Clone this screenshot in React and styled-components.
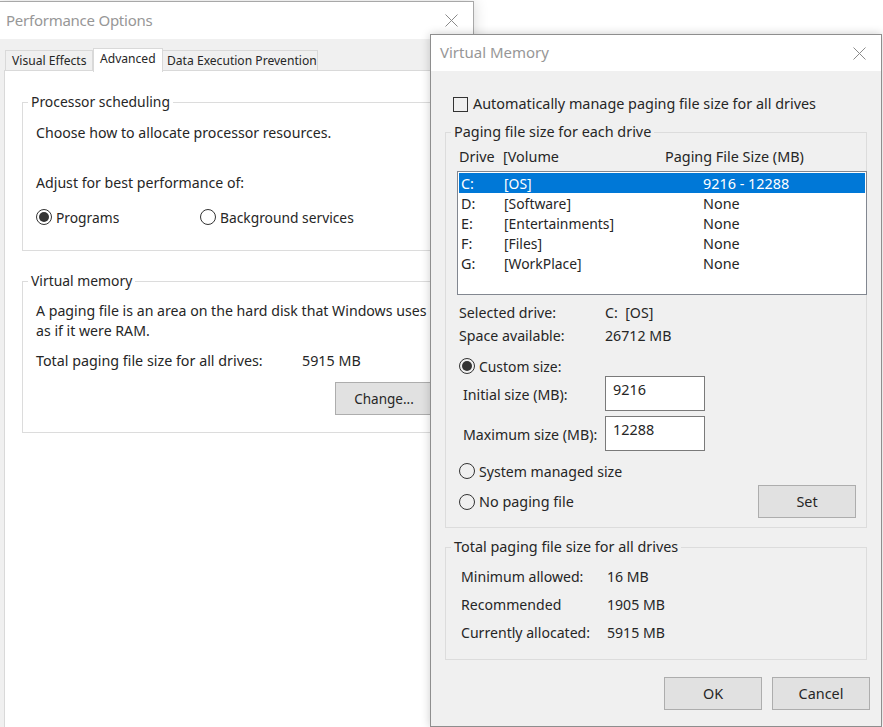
import React from "react";
import styled, { createGlobalStyle } from "styled-components";

const Global = createGlobalStyle`
  html, body { margin: 0; padding: 0; background: #fff; }
  * { box-sizing: border-box; }
`;

const Desktop = styled.div`
  position: relative;
  width: 883px;
  height: 727px;
  overflow: hidden;
  background: #fff;
  font-family: "Noto Sans", "Open Sans", sans-serif;
  font-size: 14.4px;
  line-height: 20px;
  color: #262626;
  white-space: nowrap;
`;

const BackWindow = styled.section`
  position: absolute;
  left: -1px;
  top: 1px;
  width: 475px;
  height: 760px;
  display: flex;
  flex-direction: column;
  font-size: 14.15px;
  background: #f0f0f0;
  border: 1px solid #a8a8a8;
  box-shadow: 0 0 14px rgba(0, 0, 0, 0.16);
`;

const DialogWindow = styled.section`
  position: absolute;
  left: 430px;
  top: 34px;
  width: 452px;
  height: 693px;
  display: flex;
  flex-direction: column;
  background: #f0f0f0;
  border: 1px solid #8e8e8e;
  box-shadow: 0 0 9px rgba(0, 0, 0, 0.2);
`;

const TitleBar = styled.header`
  display: flex;
  align-items: center;
  justify-content: space-between;
  flex: none;
  height: ${(p) => p.$height}px;
  padding: 0 15px 0 ${(p) => p.$left}px;
  background: #fff;
`;

const TitleText = styled.h1`
  margin: 0 0 2px;
  font-size: 15px;
  font-weight: 400;
  letter-spacing: ${(p) => p.$spacing || 0}px;
  color: #979797;
`;

const CloseGlyph = styled.svg`
  display: block;
  width: 13px;
  height: 13px;
  stroke: #8a8a8a;
  stroke-width: 1;
  fill: none;
`;

const CloseIcon = () => (
  <CloseGlyph viewBox="0 0 13 13">
    <path d="M0.5 0.5 L12.5 12.5 M12.5 0.5 L0.5 12.5" />
  </CloseGlyph>
);

const TabStrip = styled.nav`
  display: flex;
  align-items: flex-end;
  flex: none;
  height: 24px;
  margin: 8px 0 0 6px;
  position: relative;
  z-index: 1;
`;

const Tab = styled.div`
  height: ${(p) => (p.$active ? 24 : 21)}px;
  width: ${(p) => p.$width}px;
  margin-bottom: ${(p) => (p.$active ? -1 : 0)}px;
  padding-left: ${(p) => p.$pad}px;
  font-size: 12.1px;
  line-height: 20px;
  background: ${(p) => (p.$active ? "#fff" : "#f0f0f0")};
  border: 1px solid #d9d9d9;
  border-bottom: ${(p) => (p.$active ? "0" : "1px solid #d9d9d9")};
  margin-left: ${(p) => (p.$active ? 0 : -1)}px;
`;

const TabPanel = styled.div`
  flex: 1;
  margin-left: 4px;
  margin-top: -1px;
  padding: 21px 0 0 17px;
  background: #fff;
  border: 1px solid #d9d9d9;
`;

const Group = styled.fieldset`
  margin: ${(p) => p.$margin || 0};
  padding: ${(p) => p.$pad || 0};
  min-width: 0;
  border: 1px solid #dcdcdc;
`;

const Legend = styled.legend`
  margin-left: 5px;
  padding: 0 3px;
  line-height: 20px;
  font-size: ${(p) => (p.$size ? `${p.$size}px` : "inherit")};
`;

const Line = styled.p`
  margin: ${(p) => p.$top || 0}px 0 0 0;
  padding-left: ${(p) => p.$left || 0}px;
  line-height: 20px;
`;

const RadioRow = styled.div`
  display: flex;
  align-items: center;
  margin-top: ${(p) => p.$top || 0}px;
  padding-left: ${(p) => p.$left || 0}px;
  height: 20px;
`;

const RadioItem = styled.label`
  display: flex;
  align-items: center;
  gap: 4px;
  width: ${(p) => (p.$width ? `${p.$width}px` : "auto")};
  font-size: ${(p) => (p.$size ? `${p.$size}px` : "inherit")};
  line-height: 21px;
`;

const RadioMark = styled.span`
  display: flex;
  align-items: center;
  justify-content: center;
  flex: none;
  width: 16px;
  height: 16px;
  border: 1px solid #333;
  border-radius: 50%;
  &::after {
    content: "";
    display: ${(p) => (p.$on ? "block" : "none")};
    width: 10px;
    height: 10px;
    border-radius: 50%;
    background: #333;
  }
`;

const Pair = styled.div`
  display: grid;
  grid-template-columns: ${(p) => p.$col}px auto;
  height: ${(p) => p.$height || 20}px;
  align-items: center;
  margin-top: ${(p) => p.$top || 0}px;
  padding-left: ${(p) => p.$left || 0}px;
  font-size: ${(p) => (p.$size ? `${p.$size}px` : "inherit")};
`;

const Button = styled.button`
  display: block;
  flex: none;
  width: 98px;
  height: 33px;
  margin: ${(p) => p.$margin || 0};
  padding: 0;
  font-family: inherit;
  font-size: ${(p) => p.$size || 14.4}px;
  color: #262626;
  background: #e1e1e1;
  border: 1px solid #adadad;
`;

const DialogBody = styled.div`
  flex: 1;
  padding: 0 11px 0 14px;
`;

const CheckRow = styled.label`
  display: flex;
  align-items: center;
  gap: 5px;
  height: 16px;
  margin-top: 25px;
  padding-left: 8px;
`;

const CheckBox = styled.span`
  display: block;
  flex: none;
  width: 15px;
  height: 15px;
  border: 1px solid #333;
`;

const ColumnHead = styled.div`
  display: grid;
  grid-template-columns: 44px 162px auto;
  height: 20px;
  margin-top: 5px;
  padding-left: 13px;
  line-height: 20px;
`;

const ListBox = styled.div`
  height: 124px;
  margin: 4px -1px 0 11px;
  padding: 1px;
  background: #fff;
  border: 1px solid #828790;
`;

const ListRow = styled.div`
  display: grid;
  grid-template-columns: 43px 199px auto;
  height: 20px;
  padding-left: 2px;
  line-height: 22px;
  color: ${(p) => (p.$selected ? "#fff" : "#262626")};
  background: ${(p) => (p.$selected ? "#0078d7" : "transparent")};
`;

const VolumeCell = styled.span`
  font-size: 13.9px;
`;

const SizeRow = styled.div`
  display: grid;
  grid-template-columns: 142px 100px;
  align-items: center;
  height: 35px;
  margin-top: ${(p) => p.$top || 0}px;
  padding-left: 17px;
`;

const SizeLabel = styled.span`
  padding-top: 2px;
  font-size: 14.2px;
`;

const SizeInput = styled.div`
  height: 35px;
  padding: 3px 0 0 7px;
  background: #fff;
  border: 1px solid #7a7a7a;
`;

const SetRow = styled.div`
  display: flex;
  align-items: center;
  justify-content: space-between;
  margin-top: 4px;
  padding: 0 10px 9px 13px;
`;

const Footer = styled.footer`
  display: flex;
  justify-content: flex-end;
  gap: 10px;
  margin-top: 17px;
`;

const drives = [
  { d: "C:", v: "[OS]", s: "9216 - 12288", selected: true },
  { d: "D:", v: "[Software]", s: "None" },
  { d: "E:", v: "[Entertainments]", s: "None" },
  { d: "F:", v: "[Files]", s: "None" },
  { d: "G:", v: "[WorkPlace]", s: "None" },
];

export default function App() {
  return (
    <Desktop>
      <Global />
      <BackWindow>
        <TitleBar $height={37} $left={6}>
          <TitleText $spacing={-0.25}>Performance Options</TitleText>
          <CloseIcon />
        </TitleBar>
        <TabStrip>
          <Tab $width={88} $pad={6}>Visual Effects</Tab>
          <Tab $active $width={70} $pad={6}>Advanced</Tab>
          <Tab $width={156} $pad={4}>Data Execution Prevention</Tab>
        </TabStrip>
        <TabPanel>
          <Group $pad="0 0 23px 0">
            <Legend $size={13.9}>Processor scheduling</Legend>
            <Line $top={11} $left={13}>Choose how to allocate processor resources.</Line>
            <Line $top={30} $left={13}>Adjust for best performance of:</Line>
            <RadioRow $top={14} $left={13}>
              <RadioItem $width={164} $size={13.8}><RadioMark $on />Programs</RadioItem>
              <RadioItem $size={13.8}><RadioMark />Background services</RadioItem>
            </RadioRow>
          </Group>
          <Group $pad="0 0 17px 0" $margin="20px 0 0 0">
            <Legend $size={13.9}>Virtual memory</Legend>
            <Line $top={10} $left={13}>
              A paging file is an area on the hard disk that Windows uses
              <br />
              as if it were RAM.
            </Line>
            <Pair $col={266} $top={10} $left={13} $size={14.3}>
              <span>Total paging file size for all drives:</span>
              <span>5915 MB</span>
            </Pair>
            <Button $margin="11px 0 0 312px" $size={13.5}>Change...</Button>
          </Group>
        </TabPanel>
      </BackWindow>

      <DialogWindow>
        <TitleBar $height={36} $left={9}>
          <TitleText>Virtual Memory</TitleText>
          <CloseIcon />
        </TitleBar>
        <DialogBody>
          <CheckRow>
            <CheckBox />
            Automatically manage paging file size for all drives
          </CheckRow>
          <Group $margin="10px 3px 0 0">
            <Legend>Paging file size for each drive</Legend>
            <ColumnHead>
              <span>Drive</span>
              <span>[Volume</span>
              <span>Paging File Size (MB)</span>
            </ColumnHead>
            <ListBox>
              {drives.map((r) => (
                <ListRow key={r.d} $selected={r.selected}>
                  <span>{r.d}</span>
                  <VolumeCell>{r.v}</VolumeCell>
                  <span>{r.s}</span>
                </ListRow>
              ))}
            </ListBox>
            <Pair $col={146} $height={23} $top={6} $left={13} $size={14.2}>
              <span>Selected drive:</span>
              <span>C:&nbsp; [OS]</span>
            </Pair>
            <Pair $col={146} $height={23} $left={13} $size={14.2}>
              <span>Space available:</span>
              <span>26712 MB</span>
            </Pair>
            <RadioRow $top={9} $left={13}>
              <RadioItem $size={13.9}><RadioMark $on />Custom size:</RadioItem>
            </RadioRow>
            <SizeRow>
              <SizeLabel>Initial size (MB):</SizeLabel>
              <SizeInput>9216</SizeInput>
            </SizeRow>
            <SizeRow $top={5}>
              <SizeLabel>Maximum size (MB):</SizeLabel>
              <SizeInput>12288</SizeInput>
            </SizeRow>
            <RadioRow $top={10} $left={13}>
              <RadioItem $size={14.1}><RadioMark />System managed size</RadioItem>
            </RadioRow>
            <SetRow>
              <RadioItem><RadioMark />No paging file</RadioItem>
              <Button>Set</Button>
            </SetRow>
          </Group>
          <Group $margin="9px 3px 0 0" $pad="0 0 13px 0">
            <Legend>Total paging file size for all drives</Legend>
            <Pair $col={146} $height={28} $top={6} $left={15} $size={14.1}>
              <span>Minimum allowed:</span>
              <span>16 MB</span>
            </Pair>
            <Pair $col={146} $height={28} $left={15} $size={14.1}>
              <span>Recommended</span>
              <span>1905 MB</span>
            </Pair>
            <Pair $col={146} $height={27} $left={15} $size={14.1}>
              <span>Currently allocated:</span>
              <span>5915 MB</span>
            </Pair>
          </Group>
          <Footer>
            <Button>OK</Button>
            <Button>Cancel</Button>
          </Footer>
        </DialogBody>
      </DialogWindow>
    </Desktop>
  );
}
